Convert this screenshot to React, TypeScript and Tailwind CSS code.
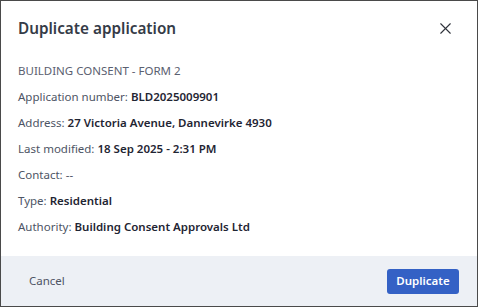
import { X } from "lucide-react";

const rows = [
  { label: "Application number:", value: "BLD2025009901" },
  { label: "Address:", value: "27 Victoria Avenue, Dannevirke 4930" },
  { label: "Last modified:", value: "18 Sep 2025 - 2:31 PM" },
  { label: "Contact:", value: "--", plain: true },
  { label: "Type:", value: "Residential" },
  { label: "Authority:", value: "Building Consent Approvals Ltd" },
];

export default function App() {
  return (
    <div
      className="w-[478px] h-[307px] border border-[#4a4a4a] bg-white flex flex-col overflow-hidden"
      style={{ fontFamily: '"Noto Sans", "Open Sans", sans-serif' }}
    >
      <div className="flex items-center justify-between pt-[15px] pl-[17px] pr-[22px]">
        <h2 className="text-[15.3px] leading-[24px] font-semibold text-[#353b47]">
          Duplicate application
        </h2>
        <button className="w-[19px] h-[19px] flex items-center justify-center text-[#2f333b]">
          <X className="w-[19px] h-[19px]" strokeWidth={1.4} />
        </button>
      </div>

      <div className="flex flex-col pt-[18px] px-[17px] text-[11.5px] leading-[26px]">
        <p className="uppercase text-[#5a6070]">Building Consent - Form 2</p>
        {rows.map((row) => (
          <p key={row.label} className="h-[26px] text-[#4d5464]">
            {row.label}{" "}
            <span className={row.plain ? "text-[#4d5464]" : "font-semibold text-[#1f2533]"}>
              {row.value}
            </span>
          </p>
        ))}
      </div>

      <div className="mt-auto h-[50px] bg-[#edf0f5] flex items-center justify-between pl-[17px] pr-[18px]">
        <button className="px-[11px] h-[25px] text-[11.5px] text-[#4d5464]">Cancel</button>
        <button className="w-[72px] h-[25px] rounded-[3px] bg-[#3461c5] text-white text-[11.5px] font-semibold">
          Duplicate
        </button>
      </div>
    </div>
  );
}
